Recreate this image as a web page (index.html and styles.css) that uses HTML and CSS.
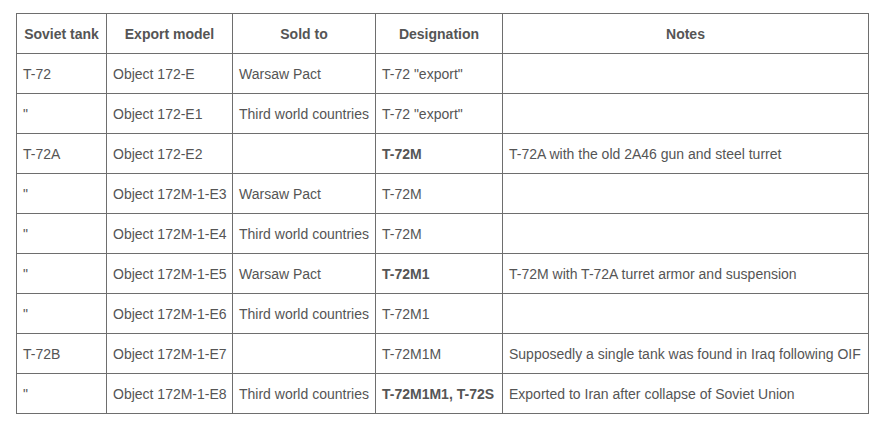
FILE: index.html
```html
<!DOCTYPE html>
<html>
<head>
<meta charset="utf-8">
<link rel="stylesheet" href="styles.css">
</head>
<body>
<table class="tanks">
<colgroup>
<col class="c1"><col class="c2"><col class="c3"><col class="c4"><col class="c5">
</colgroup>
<thead>
<tr><th>Soviet tank</th><th>Export model</th><th>Sold to</th><th>Designation</th><th>Notes</th></tr>
</thead>
<tbody>
<tr><td>T-72</td><td>Object 172-E</td><td>Warsaw Pact</td><td>T-72 "export"</td><td></td></tr>
<tr><td>"</td><td>Object 172-E1</td><td>Third world countries</td><td>T-72 "export"</td><td></td></tr>
<tr><td>T-72A</td><td>Object 172-E2</td><td></td><td><b>T-72M</b></td><td>T-72A with the old 2A46 gun and steel turret</td></tr>
<tr><td>"</td><td>Object 172M-1-E3</td><td>Warsaw Pact</td><td>T-72M</td><td></td></tr>
<tr><td>"</td><td>Object 172M-1-E4</td><td>Third world countries</td><td>T-72M</td><td></td></tr>
<tr><td>"</td><td>Object 172M-1-E5</td><td>Warsaw Pact</td><td><b>T-72M1</b></td><td>T-72M with T-72A turret armor and suspension</td></tr>
<tr><td>"</td><td>Object 172M-1-E6</td><td>Third world countries</td><td>T-72M1</td><td></td></tr>
<tr><td>T-72B</td><td>Object 172M-1-E7</td><td></td><td>T-72M1M</td><td>Supposedly a single tank was found in Iraq following OIF</td></tr>
<tr><td>"</td><td>Object 172M-1-E8</td><td>Third world countries</td><td><b>T-72M1M1, T-72S</b></td><td>Exported to Iran after collapse of Soviet Union</td></tr>
</tbody>
</table>
</body>
</html>
```
FILE: styles.css
```css
html, body {
  margin: 0;
  background: #fff;
}
body {
  padding: 13px 16px;
  font-family: "Liberation Sans", Arial, sans-serif;
  font-size: 14px;
  color: #555;
}
.tanks {
  border-collapse: collapse;
  table-layout: fixed;
  width: 852px;
}
.c1 { width: 90px; }
.c2 { width: 126px; }
.c3 { width: 143px; }
.c4 { width: 127px; }
.c5 { width: 366px; }
.tanks th, .tanks td {
  border: 1px solid #6e6e6e;
  height: 40px;
  padding: 0 6px;
  box-sizing: border-box;
  white-space: nowrap;
  vertical-align: middle;
}
.tanks th {
  text-align: center;
  font-weight: bold;
  color: #555;
}
.tanks td {
  text-align: left;
}
.tanks b {
  font-weight: bold;
}
```
